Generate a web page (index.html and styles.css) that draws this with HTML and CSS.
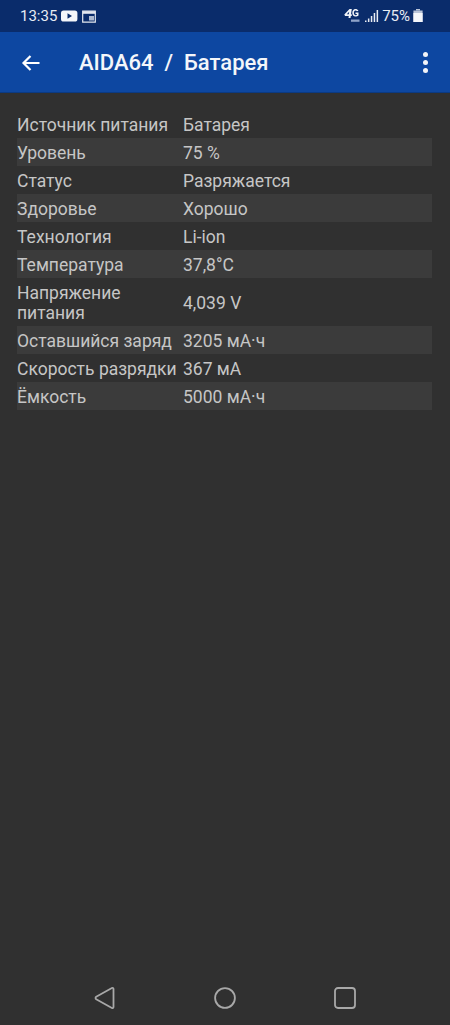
FILE: index.html
```html
<!DOCTYPE html>
<html lang="ru">
<head>
<meta charset="utf-8">
<title>AIDA64 / Батарея</title>
<link rel="stylesheet" href="styles.css">
</head>
<body>
<div class="screen">
  <div class="status">
    <div class="status-left">
      <span class="time">13:35</span>
      <svg class="ic-yt" width="17" height="12" viewBox="0 0 17 12"><rect width="16.4" height="11" y=".5" rx="2.6" fill="#f4f6fa"/><path d="M6.5 3.3v5.4L11 6z" fill="#0a2c6b"/></svg>
      <svg class="ic-cal" width="14" height="14" viewBox="0 0 14 14"><path d="M.7 2.200h12.600v10.900H.7z" fill="none" stroke="#e4e8f0" stroke-width="1.200"/><path d="M.7 2.200h12.600v2.600H.7z" fill="#e4e8f0"/><path d="M7 7h5v4.500H7z" fill="#e4e8f0" opacity=".75"/></svg>
    </div>
    <div class="status-right">
      <svg class="ic-4g" width="16" height="15" viewBox="0 0 16 15"><path d="M5.500 1 .3 6.500l.8 1.500h3.700l-.3 2h2l.3-2h1V6.300h-.8l.8-5.300zM4.800 6.300H2.800l2.400-2.600z" fill="#f0f3f8"/><path d="M14.500 2.800C13.800 1.600 12.700 1 11.500 1 9.400 1 8.200 2.800 8.300 5c.1 2.200 1.300 3.600 3.100 3.600 1.200 0 2.200-.5 3.100-1.200V4.500h-3V6h1.400v.7c-.4.300-.8.500-1.300.5-.9 0-1.700-.9-1.700-2.200 0-1.300.6-2.500 1.600-2.500.6 0 1.100.3 1.500.8z" fill="#f0f3f8"/><path d="M7 11.500h8.500v2.300H7z" fill="#8fa3c8"/></svg>
      <svg class="ic-sig" width="14" height="14" viewBox="0 0 14 14"><g fill="#e8ecf3"><rect x="0" y="11.500" width="1.500" height="1.500"/><rect x="2.900" y="9.500" width="1.500" height="3.500"/><rect x="5.800" y="7" width="1.500" height="6"/><rect x="8.700" y="4" width="1.500" height="9"/><rect x="11.600" y="1" width="1.500" height="12"/></g></svg>
      <span class="pct">75%</span>
      <svg class="ic-bat" width="10" height="14" viewBox="0 0 10 14"><path d="M3 0h4v1.500H3z" fill="#b9c4d8"/><path d="M.4 1.500h9.200V13H.4z" fill="#b9c4d8"/><path d="M.4 4h9.200v9H.4z" fill="#f4f6fa"/></svg>
    </div>
  </div>
  <header class="appbar">
    <svg class="ic-back" width="20" height="20" viewBox="0 0 20 20"><path d="M18.500 10H2.500M9.500 3 2.500 10l7 7" fill="none" stroke="#fff" stroke-width="2.200"/></svg>
    <h1 class="title">AIDA64&nbsp; /&nbsp; Батарея</h1>
    <div class="dots"><i></i><i></i><i></i></div>
  </header>
  <main class="table">
    <div class="row"><div class="k">Источник питания</div><div class="v">Батарея</div></div>
    <div class="row alt"><div class="k">Уровень</div><div class="v">75 %</div></div>
    <div class="row"><div class="k">Статус</div><div class="v">Разряжается</div></div>
    <div class="row alt"><div class="k">Здоровье</div><div class="v">Хорошо</div></div>
    <div class="row"><div class="k">Технология</div><div class="v">Li-ion</div></div>
    <div class="row alt"><div class="k">Температура</div><div class="v">37,8°C</div></div>
    <div class="row"><div class="k">Напряжение питания</div><div class="v">4,039 V</div></div>
    <div class="row alt"><div class="k">Оставшийся заряд</div><div class="v">3205 мА·ч</div></div>
    <div class="row"><div class="k">Скорость разрядки</div><div class="v">367 мА</div></div>
    <div class="row alt"><div class="k">Ёмкость</div><div class="v">5000 мА·ч</div></div>
  </main>
  <nav class="navbar">
    <svg width="22" height="24" viewBox="0 0 22 24"><path d="M19.500 3v18c0 1-.8 1.400-1.600 1L2.200 13.200c-.9-.5-.9-1.900 0-2.400L17.900 2c.8-.4 1.600 0 1.600 1z" fill="none" stroke="#a8a8a8" stroke-width="1.800"/></svg>
    <svg width="22" height="22" viewBox="0 0 22 22"><circle cx="11" cy="11" r="9.900" fill="none" stroke="#a8a8a8" stroke-width="1.800"/></svg>
    <svg width="22" height="22" viewBox="0 0 22 22"><rect x="1" y="1" width="20" height="20" rx="3" fill="none" stroke="#a8a8a8" stroke-width="1.800"/></svg>
  </nav>
</div>
</body>
</html>
```
FILE: styles.css
```css
* { box-sizing: border-box; }
html, body { margin: 0; padding: 0; }
body { background: #303030; font-family: Roboto, "Noto Sans", sans-serif; }
.screen { width: 450px; height: 1025px; display: flex; flex-direction: column; overflow: hidden; background: #303030; }
.status { height: 32px; flex: none; background: #0a2c6b; display: flex; justify-content: space-between; align-items: center; padding: 0 27px 1px 20px; color: #e8ecf3; font-size: 15px; }
.status-left, .status-right { display: flex; align-items: center; }
.time { margin-right: 4px; }
.ic-yt { margin-right: 4px; }
.ic-4g { margin-right: 5px; }
.ic-sig { margin-right: 3px; }
.pct { margin-right: 3px; }
.appbar { height: 61px; flex: none; background: #0d47a1; border-bottom: 1px solid #0b3a82; display: flex; align-items: center; padding: 1px 22px 0 21px; }
.ic-back { flex: none; }
.title { flex: 1; margin: 0 0 0 38px; color: #f4f6fa; font-size: 22px; font-weight: 500; white-space: nowrap; }
.dots { display: flex; flex-direction: column; gap: 3px; }
.dots i { display: block; width: 5px; height: 5px; border-radius: 50%; background: #f2f4f8; }
.table { flex: 1; padding: 17px 18px 0 17px; color: #c6c6c6; font-size: 17.500px; line-height: 20px; }
.row { display: flex; align-items: center; padding: 5px 0 3px; }
.alt { background: #3b3b3b; }
.k { width: 166px; flex: none; padding-right: 4px; }
.v { flex: 1; }
.navbar { height: 55px; flex: none; display: flex; justify-content: center; align-items: center; gap: 98px; padding: 1px 0 0 0; }
```
